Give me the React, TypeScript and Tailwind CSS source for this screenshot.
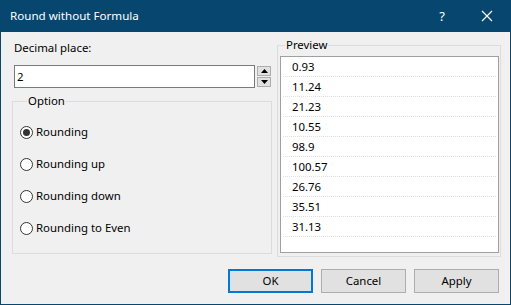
import React from "react";

const values = ["0.93", "11.24", "21.23", "10.55", "98.9", "100.57", "26.76", "35.51", "31.13", ""];
const options = ["Rounding", "Rounding up", "Rounding down", "Rounding to Even"];

function Radio({ checked, label }: { checked?: boolean; label: string }) {
  return (
    <div className="h-[32px] flex items-center">
      <div className="w-[13px] h-[13px] rounded-full border border-[#333333] bg-white flex items-center justify-center">
        {checked && <div className="w-[7px] h-[7px] rounded-full bg-[#333333]" />}
      </div>
      <span className="ml-[3px]">{label}</span>
    </div>
  );
}

export default function App() {
  return (
    <div className="w-[511px] h-[305px] bg-[#f0f0f0] flex flex-col font-['Noto_Sans',sans-serif] text-[11.4px] text-black leading-none">
      <div className="h-[32px] bg-[#07476f] flex items-center text-white shrink-0">
        <span className="pl-[10px] text-[11.6px]">Round without Formula</span>
        <span className="ml-auto mr-[36px] text-[13px]">?</span>
        <svg width="12" height="12" viewBox="0 0 12 12" className="mr-[18px]">
          <path d="M1 1 L11 11 M11 1 L1 11" stroke="white" strokeWidth="1.1" />
        </svg>
      </div>
      <div className="flex-1 border-x border-b border-[#07476f] flex flex-col">
        <div className="flex pl-[11px] pt-[5px]">
          <div className="w-[260px] flex flex-col pt-[3px]">
            <div className="h-[16px] pl-[2px] flex items-center">Decimal place:</div>
            <div className="mt-[9px] flex">
              <div className="ml-[2px] w-[241px] h-[23px] border border-[#7a7a7a] bg-white pl-[2px] flex items-center">2</div>
              <div className="ml-[2px] w-[14px] h-[23px] flex flex-col justify-center gap-[1px]">
                <div className="h-[10px] bg-[#e1e1e1] border border-[#adadad] flex items-center justify-center">
                  <svg width="7" height="4" viewBox="0 0 7 4"><path d="M0 4 L3.5 0 L7 4 Z" fill="black" /></svg>
                </div>
                <div className="h-[10px] bg-[#e1e1e1] border border-[#adadad] flex items-center justify-center">
                  <svg width="7" height="4" viewBox="0 0 7 4"><path d="M0 0 L7 0 L3.5 4 Z" fill="black" /></svg>
                </div>
              </div>
            </div>
            <fieldset className="mt-[5px] h-[161px] border border-[#dcdcdc] pl-[7px]">
              <legend className="ml-[7px] px-[1px] h-[16px] leading-[16px]">Option</legend>
              <div className="pt-[7px] flex flex-col">
                {options.map((o, i) => (
                  <Radio key={o} label={o} checked={i === 0} />
                ))}
              </div>
            </fieldset>
          </div>
          <fieldset className="ml-[5px] w-[224px] h-[220px] border border-[#dcdcdc]">
            <legend className="ml-[7px] px-[1px] h-[16px] leading-[16px]">Preview</legend>
            <div className="mt-[3px] ml-[2px] w-[219px] h-[197px] border border-[#a0a0a0] bg-white">
              <div className="mx-[2px]">
                {values.map((v, i) => (
                  <div key={i} className="h-[20px] border-b border-dotted border-[#dedede] flex items-center pl-[9px]">
                    {v}
                  </div>
                ))}
              </div>
            </div>
          </fieldset>
        </div>
        <div className="mt-auto mb-[11px] flex justify-end gap-[8px] pr-[11px]">
          <button className="w-[85px] h-[24px] bg-[#e1e1e1] border-2 border-[#0078d7] flex items-center justify-center">OK</button>
          <button className="w-[85px] h-[24px] bg-[#e1e1e1] border border-[#adadad] flex items-center justify-center">Cancel</button>
          <button className="w-[85px] h-[24px] bg-[#e1e1e1] border border-[#adadad] flex items-center justify-center">Apply</button>
        </div>
      </div>
    </div>
  );
}
